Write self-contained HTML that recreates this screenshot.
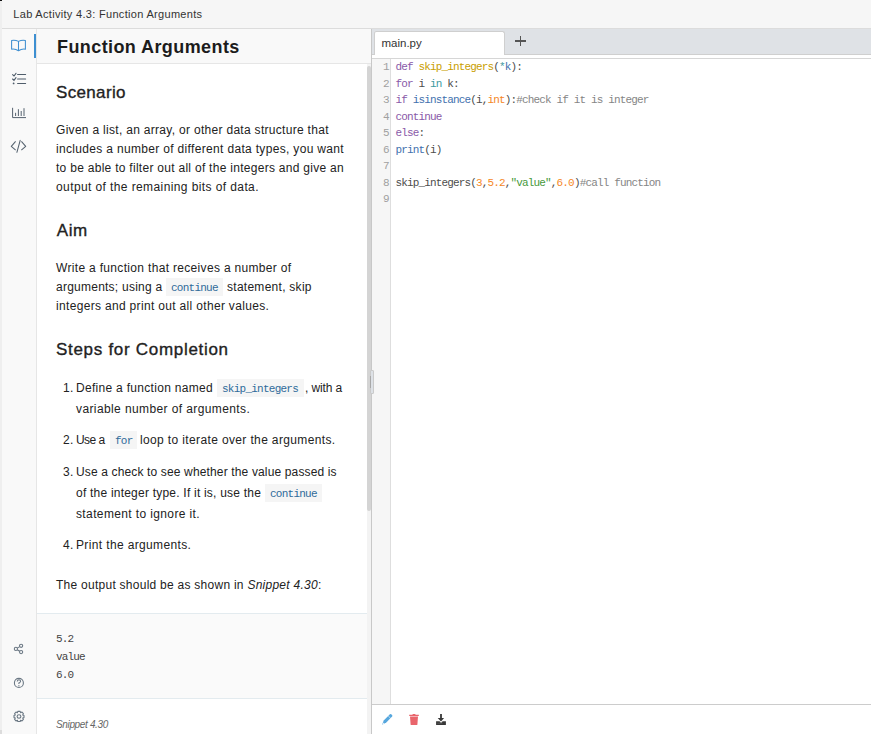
<!DOCTYPE html>
<html><head><meta charset="utf-8"><style>
html,body{margin:0;padding:0;width:871px;height:734px;overflow:hidden;background:#fff;}
body{position:relative;font-family:"Liberation Sans", sans-serif;color:#222;}
.t{position:absolute;white-space:pre;font-family:"Liberation Sans", sans-serif;}
.m{font-family:"Liberation Mono", monospace;}
svg{position:absolute;overflow:visible;}
</style></head><body>
<div style="position:absolute;left:0px;top:0px;width:871px;height:28px;background:#f6f6f6;"></div>
<div style="position:absolute;left:0px;top:28px;width:871px;height:1px;background:#dcdcdc;"></div>
<div style="position:absolute;left:0px;top:29px;width:36px;height:705px;background:#f9f9f9;"></div>
<div style="position:absolute;left:0px;top:0px;width:2px;height:734px;background:#efefef;"></div>
<div style="position:absolute;left:0px;top:0px;width:2px;height:1px;background:#111;"></div>
<div style="position:absolute;left:0px;top:730px;width:2px;height:4px;background:#dcdcdc;"></div>
<div style="position:absolute;left:36px;top:29px;width:1px;height:705px;background:#e6e6e6;"></div>
<div style="position:absolute;left:37px;top:29px;width:334px;height:34px;background:#f9f9f9;"></div>
<div style="position:absolute;left:37px;top:63px;width:334px;height:1px;background:#e6e6e6;"></div>
<div style="position:absolute;left:34px;top:34px;width:2px;height:24px;background:#3d8fd1;"></div>
<div style="position:absolute;left:37px;top:613px;width:330px;height:1px;background:#e3ebef;"></div>
<div style="position:absolute;left:37px;top:614px;width:330px;height:84px;background:#fafafa;"></div>
<div style="position:absolute;left:37px;top:698px;width:330px;height:1px;background:#e3ebef;"></div>
<div style="position:absolute;left:367px;top:64px;width:4px;height:670px;background:#f3f3f3;"></div>
<div style="position:absolute;left:367px;top:66px;width:4px;height:445px;background:#d4d4d4;border-radius:2px;"></div>
<div style="position:absolute;left:371px;top:29px;width:1px;height:705px;background:#c8c8c8;"></div>
<div style="position:absolute;left:372px;top:29px;width:499px;height:25px;background:#dfe2e6;"></div>
<div style="position:absolute;left:372px;top:54px;width:499px;height:1px;background:#cfcfcf;"></div>
<div style="position:absolute;left:372px;top:58px;width:499px;height:1px;background:#d6d6d6;"></div>
<div style="position:absolute;left:374px;top:31px;width:131px;height:24px;background:#ffffff;border:1px solid #cfcfcf;border-bottom:none;border-radius:2.5px 2.5px 0 0;box-sizing:border-box;height:24px;"></div>
<div style="position:absolute;left:372px;top:59px;width:18px;height:645px;background:#f6f6f6;"></div>
<div style="position:absolute;left:390px;top:59px;width:1px;height:645px;background:#dedede;"></div>
<div style="position:absolute;left:372px;top:704px;width:499px;height:1px;background:#cccccc;"></div>
<div style="position:absolute;left:369.5px;top:370px;width:4.300000000000011px;height:23.5px;background:#dde1e6;border:1px solid #cacaca;box-sizing:border-box;border-radius:1px;"></div>
<div style="position:absolute;left:370.3px;top:376px;width:1.0px;height:12px;background:#a8a8a8;"></div>
<div class="t" style="left:13.3px;top:6.49px;font-size:11px;line-height:16px;letter-spacing:0.31px;color:#333;">Lab Activity 4.3: Function Arguments</div>
<div class="t" style="left:57px;top:34.06px;font-size:18px;line-height:27px;letter-spacing:0.41px;color:#1c1c1c;font-weight:bold;">Function Arguments</div>
<div class="t" style="left:56px;top:80.11px;font-size:17px;line-height:26px;letter-spacing:0.34px;color:#222;-webkit-text-stroke:0.35px #222;">Scenario</div>
<div class="t" style="left:56px;top:120.84px;font-size:12px;line-height:18px;letter-spacing:0.3px;">Given a list, an array, or other data structure that</div>
<div class="t" style="left:56px;top:139.84px;font-size:12px;line-height:18px;letter-spacing:0.328px;">includes a number of different data types, you want</div>
<div class="t" style="left:56px;top:158.84px;font-size:12px;line-height:18px;letter-spacing:0.282px;">to be able to filter out all of the integers and give an</div>
<div class="t" style="left:56px;top:177.84px;font-size:12px;line-height:18px;letter-spacing:0.4px;">output of the remaining bits of data.</div>
<div class="t" style="left:56.8px;top:218.11px;font-size:17px;line-height:26px;letter-spacing:0.5px;color:#222;-webkit-text-stroke:0.35px #222;">Aim</div>
<div class="t" style="left:56px;top:258.84px;font-size:12px;line-height:18px;letter-spacing:0.324px;">Write a function that receives a number of</div>
<div class="t" style="left:56px;top:277.84px;font-size:12px;line-height:18px;letter-spacing:0.241px;">arguments; using a</div>
<div class="t" style="left:227px;top:277.84px;font-size:12px;line-height:18px;letter-spacing:0.271px;">statement, skip</div>
<div class="t" style="left:56px;top:296.84px;font-size:12px;line-height:18px;letter-spacing:0.326px;">integers and print out all other values.</div>
<div class="t" style="left:56px;top:337.11px;font-size:17px;line-height:26px;letter-spacing:0.7px;color:#222;-webkit-text-stroke:0.35px #222;">Steps for Completion</div>
<div class="t" style="left:63px;top:378.84px;font-size:12px;line-height:18px;letter-spacing:0.3px;">1.</div>
<div class="t" style="left:76px;top:378.84px;font-size:12px;line-height:18px;letter-spacing:0.3px;">Define a function named</div>
<div class="t" style="left:305px;top:378.84px;font-size:12px;line-height:18px;letter-spacing:-0.129px;">, with a</div>
<div class="t" style="left:76px;top:399.84px;font-size:12px;line-height:18px;letter-spacing:0.393px;">variable number of arguments.</div>
<div class="t" style="left:63px;top:430.84px;font-size:12px;line-height:18px;letter-spacing:0.3px;">2.</div>
<div class="t" style="left:76px;top:430.84px;font-size:12px;line-height:18px;letter-spacing:-0.55px;">Use a</div>
<div class="t" style="left:140px;top:430.84px;font-size:12px;line-height:18px;letter-spacing:0.365px;">loop to iterate over the arguments.</div>
<div class="t" style="left:63px;top:462.84px;font-size:12px;line-height:18px;letter-spacing:0.3px;">3.</div>
<div class="t" style="left:76px;top:462.84px;font-size:12px;line-height:18px;letter-spacing:0.144px;">Use a check to see whether the value passed is</div>
<div class="t" style="left:76px;top:483.84px;font-size:12px;line-height:18px;letter-spacing:0.219px;">of the integer type. If it is, use the</div>
<div class="t" style="left:76px;top:504.84px;font-size:12px;line-height:18px;letter-spacing:0.373px;">statement to ignore it.</div>
<div class="t" style="left:63px;top:536.14px;font-size:12px;line-height:18px;letter-spacing:0.3px;">4.</div>
<div class="t" style="left:76px;top:536.14px;font-size:12px;line-height:18px;letter-spacing:0.363px;">Print the arguments.</div>
<div class="t" style="left:56px;top:575.84px;font-size:12px;line-height:18px;letter-spacing:0.26px;">The output should be as shown in <i>Snippet 4.30</i>:</div>
<div style="position:absolute;left:166px;top:278px;width:57px;height:18px;background:#f5f5f5;"></div>
<div class="t m" style="left:171px;top:280.07px;font-size:11px;line-height:16px;letter-spacing:-0.75px;color:#2f6b9a;">continue</div>
<div style="position:absolute;left:217px;top:379px;width:87px;height:18px;background:#f5f5f5;"></div>
<div class="t m" style="left:222px;top:381.07px;font-size:11px;line-height:16px;letter-spacing:-0.75px;color:#2f6b9a;">skip_integers</div>
<div style="position:absolute;left:110px;top:431px;width:27px;height:18px;background:#f5f5f5;"></div>
<div class="t m" style="left:115px;top:433.07px;font-size:11px;line-height:16px;letter-spacing:-0.75px;color:#2f6b9a;">for</div>
<div style="position:absolute;left:265px;top:484px;width:57px;height:18px;background:#f5f5f5;"></div>
<div class="t m" style="left:270px;top:486.07px;font-size:11px;line-height:16px;letter-spacing:-0.75px;color:#2f6b9a;">continue</div>
<div class="t m" style="left:56px;top:630.57px;font-size:11px;line-height:16px;letter-spacing:-0.85px;color:#444;">5.2</div>
<div class="t m" style="left:56px;top:648.57px;font-size:11px;line-height:16px;letter-spacing:-0.85px;color:#444;">value</div>
<div class="t m" style="left:56px;top:666.57px;font-size:11px;line-height:16px;letter-spacing:-0.85px;color:#444;">6.0</div>
<div class="t" style="left:56px;top:716.53px;font-size:10px;line-height:15px;letter-spacing:-0.35px;color:#666;font-style:italic;">Snippet 4.30</div>
<div class="t" style="left:381.5px;top:34.72px;font-size:11.5px;line-height:17px;letter-spacing:0px;color:#333;">main.py</div>
<div style="position:absolute;left:515px;top:40px;width:11px;height:1.5px;background:#555;"></div>
<div style="position:absolute;left:519.7px;top:35.5px;width:1.5px;height:10.5px;background:#555;"></div>
<div class="t m" style="left:383px;top:59.07px;font-size:11px;line-height:16px;letter-spacing:-0.85px;color:#a0a0a0;">1</div>
<div class="t m" style="left:395.5px;top:59.07px;font-size:11px;line-height:16px;letter-spacing:-0.85px;"><span style="color:#8959a8">def</span> <span style="color:#c99e00">skip_integers</span><span style="color:#4d4d4c">(</span><span style="color:#3e999f">*</span><span style="color:#4271ae">k</span><span style="color:#4d4d4c">):</span></div>
<div class="t m" style="left:383px;top:75.57px;font-size:11px;line-height:16px;letter-spacing:-0.85px;color:#a0a0a0;">2</div>
<div class="t m" style="left:395.5px;top:75.57px;font-size:11px;line-height:16px;letter-spacing:-0.85px;"><span style="color:#8959a8">for</span> <span style="color:#4d4d4c">i</span> <span style="color:#3e999f">in</span> <span style="color:#4d4d4c">k:</span></div>
<div class="t m" style="left:383px;top:92.07px;font-size:11px;line-height:16px;letter-spacing:-0.85px;color:#a0a0a0;">3</div>
<div class="t m" style="left:395.5px;top:92.07px;font-size:11px;line-height:16px;letter-spacing:-0.85px;"><span style="color:#8959a8">if</span> <span style="color:#4271ae">isinstance</span><span style="color:#4d4d4c">(i,</span><span style="color:#f5871f">int</span><span style="color:#4d4d4c">):</span><span style="color:#858585">#check if it is integer</span></div>
<div class="t m" style="left:383px;top:108.57px;font-size:11px;line-height:16px;letter-spacing:-0.85px;color:#a0a0a0;">4</div>
<div class="t m" style="left:395.5px;top:108.57px;font-size:11px;line-height:16px;letter-spacing:-0.85px;"><span style="color:#8959a8">continue</span></div>
<div class="t m" style="left:383px;top:125.07px;font-size:11px;line-height:16px;letter-spacing:-0.85px;color:#a0a0a0;">5</div>
<div class="t m" style="left:395.5px;top:125.07px;font-size:11px;line-height:16px;letter-spacing:-0.85px;"><span style="color:#8959a8">else</span><span style="color:#4d4d4c">:</span></div>
<div class="t m" style="left:383px;top:141.57px;font-size:11px;line-height:16px;letter-spacing:-0.85px;color:#a0a0a0;">6</div>
<div class="t m" style="left:395.5px;top:141.57px;font-size:11px;line-height:16px;letter-spacing:-0.85px;"><span style="color:#4271ae">print</span><span style="color:#4d4d4c">(i)</span></div>
<div class="t m" style="left:383px;top:158.07px;font-size:11px;line-height:16px;letter-spacing:-0.85px;color:#a0a0a0;">7</div>
<div class="t m" style="left:383px;top:174.57px;font-size:11px;line-height:16px;letter-spacing:-0.85px;color:#a0a0a0;">8</div>
<div class="t m" style="left:395.5px;top:174.57px;font-size:11px;line-height:16px;letter-spacing:-0.85px;"><span style="color:#4d4d4c">skip_integers(</span><span style="color:#f5871f">3</span><span style="color:#4d4d4c">,</span><span style="color:#f5871f">5.2</span><span style="color:#4d4d4c">,</span><span style="color:#45993a">"value"</span><span style="color:#4d4d4c">,</span><span style="color:#f5871f">6.0</span><span style="color:#4d4d4c">)</span><span style="color:#858585">#call function</span></div>
<div class="t m" style="left:383px;top:191.07px;font-size:11px;line-height:16px;letter-spacing:-0.85px;color:#a0a0a0;">9</div>
<svg style="left:0;top:0" width="871" height="734" viewBox="0 0 871 734"><g fill="none" stroke="#3f8fd0" stroke-width="1.05" stroke-linejoin="round"><path d="M11.6,40.4 Q15.2,39.6 18.5,41.4 Q21.8,39.6 25.4,40.4 V49.2 Q21.8,48.6 18.5,50.7 Q15.2,48.6 11.6,49.2 Z M18.5,41.4 V50.7"/></g><g fill="none" stroke="#4f5d6b" stroke-width="1.1" stroke-linecap="round"><path d="M12.6,74.6 L14,76 L16,73.3"/><path d="M12.6,79 L14,80.4 L16,77.7"/><path d="M17.6,74.5 H25.6 M17.6,79 H25.6 M17.6,83.5 H25.6"/></g><circle cx="13.6" cy="83.4" r="0.9" fill="#4f5d6b"/><g fill="none" stroke="#55626f" stroke-width="1.0"><path d="M12.6,107.8 V117.6 H26"/><path d="M15.6,112.8 V116 M18.4,109.2 V116 M21.2,111 V116 M24,108.2 V116"/></g><g fill="none" stroke="#55626f" stroke-width="1.05" stroke-linecap="round" stroke-linejoin="round"><path d="M15.4,141.7 L11.3,146.3 L15.4,149.8 M21.6,141.7 L25.7,146.3 L21.6,149.8 M20.2,140.4 L16.9,152.3"/></g><g fill="none" stroke="#6b7884" stroke-width="1.1"><circle cx="15.9" cy="648.9" r="1.6"/><circle cx="21.1" cy="645.8" r="1.6"/><circle cx="21.1" cy="652.1" r="1.6"/><path d="M17.3,648.1 L19.7,646.6 M17.3,649.7 L19.7,651.3"/></g><g fill="none" stroke="#6b7884" stroke-width="1.1"><circle cx="18.9" cy="682.9" r="4.5"/><path d="M17.2,681.5 Q17.3,679.8 18.9,679.8 Q20.6,679.9 20.6,681.3 Q20.5,682.5 18.9,683 V684"/></g><circle cx="18.9" cy="685.6" r="0.6" fill="#6b7884"/><g fill="none" stroke="#6b7884" stroke-width="1.1" stroke-linejoin="round"><path d="M17.8,711.4 H20.2 L20.6,712.7 L22,712 L23.4,713.6 L22.7,714.9 L24,715.4 V717.6 L22.7,718 L23.4,719.4 L22,720.9 L20.6,720.2 L20.2,721.5 H17.8 L17.4,720.2 L16,720.9 L14.6,719.4 L15.3,718 L14,717.6 V715.4 L15.3,714.9 L14.6,713.6 L16,712 L17.4,712.7 Z"/><ellipse cx="19" cy="716.5" rx="1.9" ry="1.7"/></g><path d="M389.9,714.2 Q390.6,713.7 391.3,714.3 L392.2,715.2 Q392.7,715.9 392.1,716.6 L386.3,722.4 L382.1,724.8 L383.7,720.4 Z" fill="#56a7de"/><path d="M388.2,715.9 L390.5,718.2" stroke="#fff" stroke-width="0.6"/><path d="M383.1,722.6 L384.3,723.8 L382.7,724.3 Z" fill="#fff" opacity="0.9"/><path d="M409.2,714.7 H418.8 V715.9 H409.2 Z M412.6,714 H415.4 V714.7 H412.6 Z M410,716.5 H418 L417.4,724.5 Q417.3,725 416.8,725 H411.2 Q410.7,725 410.6,724.5 Z" fill="#e9656c"/><path d="M440.1,714.1 H441.9 V718 H444.1 L441,721.4 L437.7,718 H440.1 Z" fill="#383838"/><path d="M436.1,721.3 H439.6 L440.4,722.4 H441.8 L442.5,721.3 H445.9 V724.9 H436.1 Z" fill="#383838"/><path d="M437.3,723.2 H442.6" stroke="#6a6a6a" stroke-width="0.6"/></svg>
</body></html>
